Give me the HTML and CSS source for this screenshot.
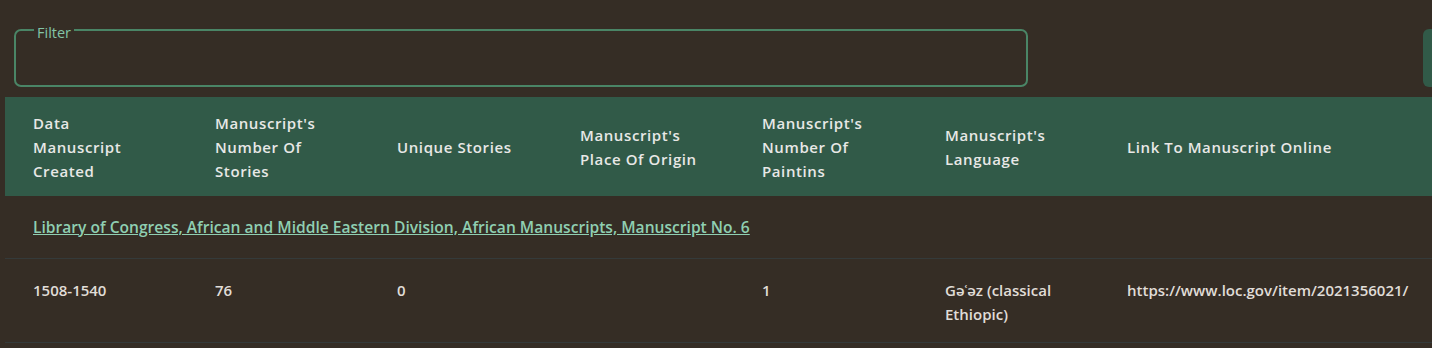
FILE: index.html
```html
<!DOCTYPE html>
<html lang="en">
<head>
    <meta charset="UTF-8">
    <title>Manuscripts</title>
    <link rel="stylesheet" href="styles.css">
</head>
<body>
    <div class="pagina">
        <div class="barra">
            <fieldset class="filtro">
                <legend>Filter</legend>
                <input type="text" class="filtro-input" aria-label="Filter">
            </fieldset>
            <button class="boton-verde" aria-label="Export"></button>
        </div>
        <table class="tabla">
            <colgroup>
                <col class="c1"><col class="c2"><col class="c3"><col class="c4"><col class="c5"><col class="c6"><col class="c7">
            </colgroup>
            <thead>
                <tr>
                    <th>Data<br>Manuscript<br>Created</th>
                    <th>Manuscript's<br>Number Of<br>Stories</th>
                    <th>Unique Stories</th>
                    <th>Manuscript's<br>Place Of Origin</th>
                    <th>Manuscript's<br>Number Of<br>Paintins</th>
                    <th>Manuscript's<br>Language</th>
                    <th>Link To Manuscript Online</th>
                </tr>
            </thead>
            <tbody>
                <tr class="grupo">
                    <td colspan="7"><a href="#">Library of Congress, African and Middle Eastern Division, African Manuscripts, Manuscript No. 6</a></td>
                </tr>
                <tr class="fila">
                    <td>1508-1540</td>
                    <td>76</td>
                    <td>0</td>
                    <td></td>
                    <td>1</td>
                    <td>Gəʿəz (classical<br>Ethiopic)</td>
                    <td>https://www.loc.gov/item/2021356021/</td>
                </tr>
            </tbody>
        </table>
    </div>
</body>
</html>
```

FILE: styles.css
```css
body {
    margin: 0;
    background-color: #352d25;
    font-family: "Open Sans", "Noto Sans", sans-serif;
    overflow: hidden;
    height: 348px;
}

.pagina {
    padding-left: 5px;
    width: 1600px;
}

.barra {
    display: flex;
    align-items: flex-start;
    padding: 17px 0 0 9px;
    gap: 395px;
}

.filtro {
    width: 1014px;
    height: 70px;
    box-sizing: border-box;
    margin: 0;
    padding: 0 18px;
    border: 2px solid #4a8566;
    border-radius: 7px;
}

.filtro legend {
    padding: 6px 3px 0;
    font-size: 14.5px;
    line-height: 20px;
    color: #83c4a6;
}

.filtro-input {
    width: 100%;
    background: none;
    border: none;
    outline: none;
}

.boton-verde {
    margin-top: 12px;
    width: 60px;
    height: 58px;
    border: none;
    border-radius: 6px;
    background-color: #315a48;
}

.tabla {
    margin-top: 10px;
    border-collapse: collapse;
    table-layout: fixed;
    width: 1520px;
    font-size: 15px;
    font-weight: 600;
}

.c1, .c2, .c4, .c6 { width: 182px; }
.c3, .c5 { width: 183px; }

.tabla th {
    background-color: #315a48;
    color: #e8e8e6;
    text-align: left;
    font-weight: 600;
    letter-spacing: 0.6px;
    line-height: 24px;
    height: 99px;
    padding: 0 28px;
    box-sizing: border-box;
    vertical-align: middle;
}

.tabla td {
    padding: 0 28px;
    color: #e0ddd8;
    line-height: 24px;
    border-bottom: 1px solid #343a3a;
}

.grupo td {
    height: 62px;
    vertical-align: middle;
    box-sizing: border-box;
}

.grupo a {
    color: #8fcfb2;
    font-size: 15.6px;
    text-decoration: underline;
}

.fila td {
    vertical-align: top;
    padding-top: 19px;
    padding-bottom: 16px;
}
```
